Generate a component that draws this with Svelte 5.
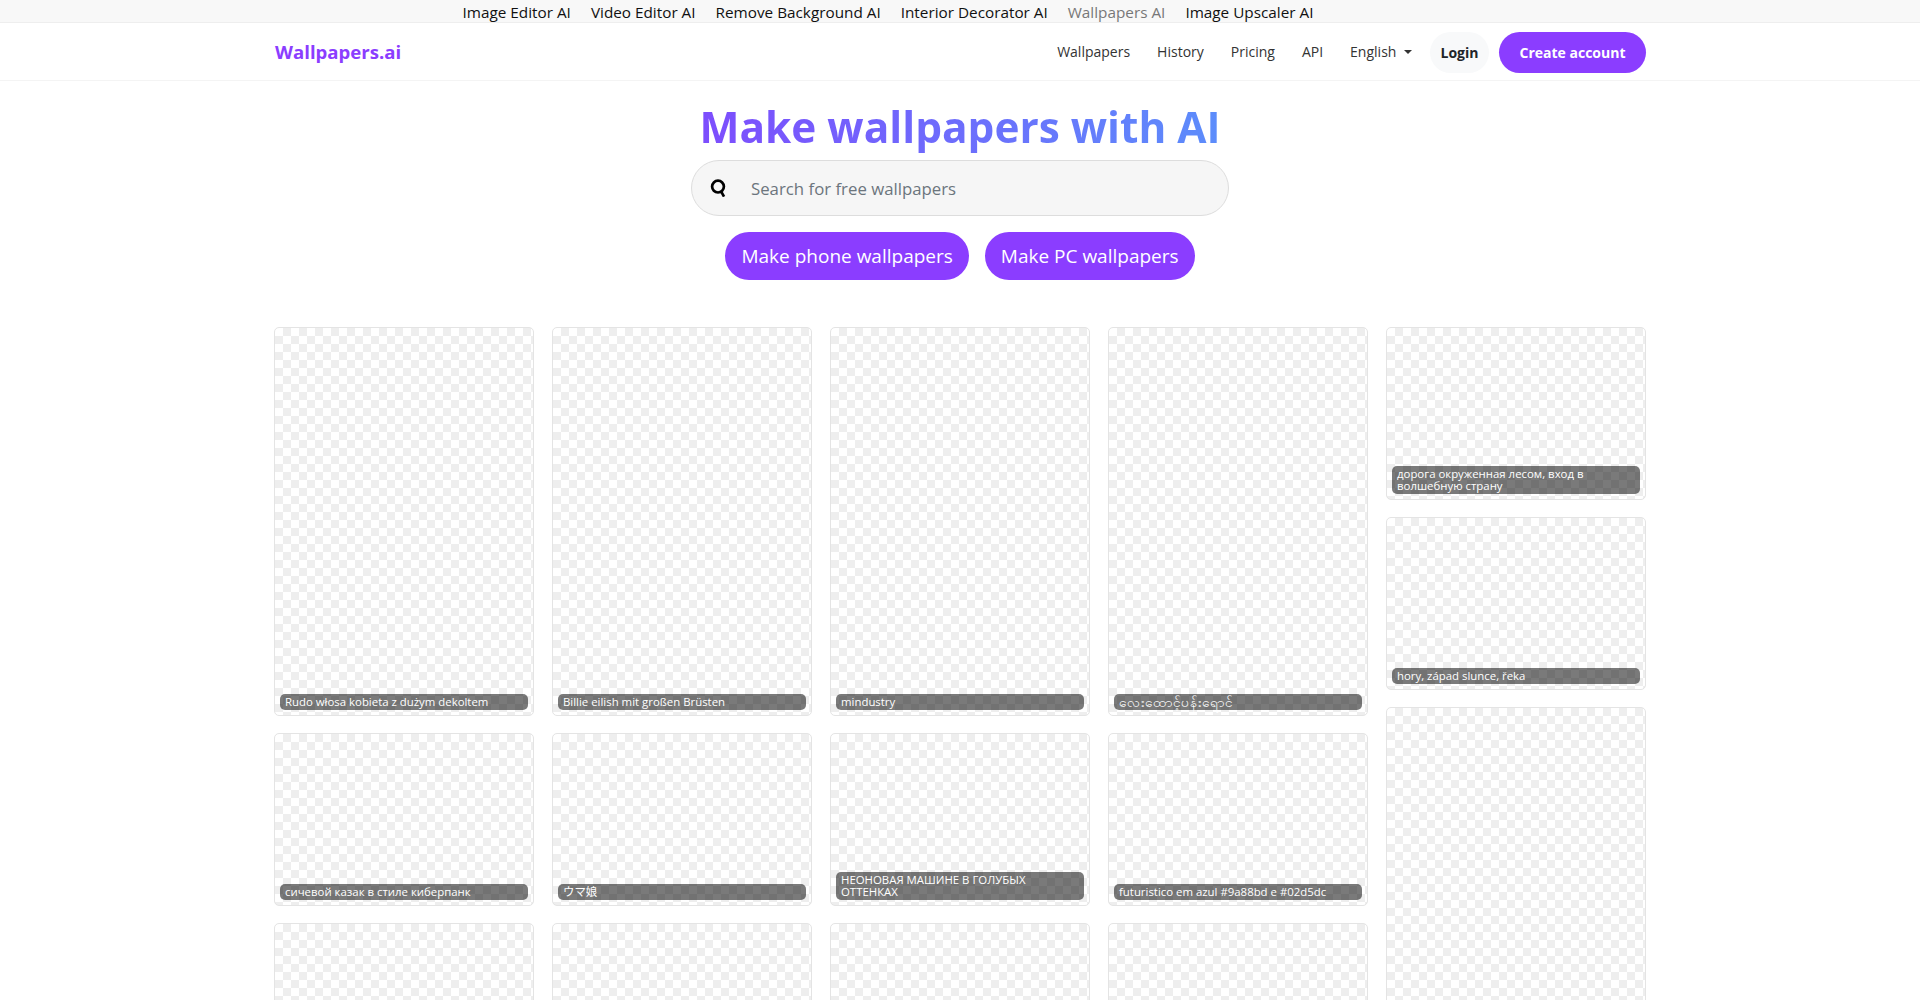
<script>
  const tools = [
    { label: 'Image Editor AI' },
    { label: 'Video Editor AI' },
    { label: 'Remove Background AI' },
    { label: 'Interior Decorator AI' },
    { label: 'Wallpapers AI', current: true },
    { label: 'Image Upscaler AI' }
  ]

  const links = ['Wallpapers', 'History', 'Pricing', 'API']

  const columns = [
    [
      { size: 'tall', prompt: 'Rudo włosa kobieta z dużym dekoltem' },
      { size: 'short', prompt: 'сичевой казак в стиле киберпанк' },
      { size: 'tall' }
    ],
    [
      { size: 'tall', prompt: 'Billie eilish mit großen Brüsten' },
      { size: 'short', prompt: 'ウマ娘' },
      { size: 'tall' }
    ],
    [
      { size: 'tall', prompt: 'mindustry' },
      { size: 'short', prompt: 'НЕОНОВАЯ МАШИНЕ В ГОЛУБЫХ ОТТЕНКАХ' },
      { size: 'tall' }
    ],
    [
      { size: 'tall', prompt: 'လေးထောင့်ပန်းရောင်', burmese: true },
      { size: 'short', prompt: 'futuristico em azul #9a88bd e #02d5dc' },
      { size: 'tall' }
    ],
    [
      { size: 'short', prompt: 'дорога окруженная лесом, вход в волшебную страну' },
      { size: 'short', prompt: 'hory, západ slunce, řeka' },
      { size: 'tall' }
    ]
  ]
</script>

<div class="page">
  <nav class="tools">
    {#each tools as tool}
      <a href="#top" class:current={tool.current}>{tool.label}</a>
    {/each}
  </nav>

  <header class="navbar">
    <div class="inner">
      <a class="brand" href="#top">Wallpapers.ai</a>
      <div class="menu">
        {#each links as link}
          <a class="link" href="#top">{link}</a>
        {/each}
        <a class="link lang" href="#top">English <span class="caret"></span></a>
        <a class="login" href="#top">Login</a>
        <a class="signup" href="#top">Create account</a>
      </div>
    </div>
  </header>

  <main>
    <h1><span>Make wallpapers with AI</span></h1>

    <form class="search">
      <svg viewBox="0 0 18 18" width="18" height="18" aria-hidden="true">
        <circle cx="8" cy="7.6" r="5.9" fill="none" stroke="#000" stroke-width="2.7" />
        <path d="M11.2 12.6 L14 17.6" fill="none" stroke="#000" stroke-width="2.7" />
      </svg>
      <input type="text" placeholder="Search for free wallpapers" />
    </form>

    <div class="actions">
      <a class="make" href="#top">Make phone wallpapers</a>
      <a class="make" href="#top">Make PC wallpapers</a>
    </div>

    <section class="gallery">
      {#each columns as column}
        <div class="column">
          {#each column as card}
            <article class="card {card.size}">
              {#if card.prompt}
                <p class="prompt" class:burmese={card.burmese}>{card.prompt}</p>
              {/if}
            </article>
          {/each}
        </div>
      {/each}
    </section>
  </main>
</div>

<style>
  :global(body) {
    background: #fff;
    color: #212529;
    font-family: "Open Sans", "Noto Sans CJK JP", sans-serif;
  }

  .page {
    height: 1000px;
    overflow: hidden;
  }

  a {
    color: inherit;
    text-decoration: none;
  }

  .tools {
    display: flex;
    justify-content: center;
    gap: 20px;
    box-sizing: border-box;
    height: 23px;
    padding-right: 144px;
    background: #f8f8f8;
    border-bottom: 1px solid #eee;
    font-size: 15.3px;
    line-height: 24px;
    color: #111;
  }

  .tools .current {
    color: #777;
  }

  .navbar {
    box-sizing: border-box;
    height: 58px;
    border-bottom: 1px solid #f4f4f4;
  }

  .inner {
    width: 1372px;
    margin: 0 auto;
    height: 100%;
    display: flex;
    align-items: center;
    justify-content: space-between;
  }

  .brand {
    margin-left: 1px;
    font-size: 18.6px;
    font-weight: 700;
    color: #8b3dff;
  }

  .menu {
    display: flex;
    align-items: center;
    font-size: 14px;
    color: #333;
  }

  .link {
    margin-right: 27px;
  }

  .lang {
    margin-right: 18px;
  }

  .caret {
    display: inline-block;
    margin-left: 4px;
    vertical-align: 3px;
    border-top: 4px solid #333;
    border-left: 4px solid transparent;
    border-right: 4px solid transparent;
  }

  .login {
    height: 41px;
    margin-top: 2px;
    padding: 0 10.5px;
    margin-right: 10px;
    border-radius: 21px;
    background: #f8f9fa;
    font-weight: 700;
    line-height: 41px;
    color: #212529;
  }

  .signup {
    height: 41px;
    margin-top: 2px;
    padding: 0 20.5px;
    border-radius: 21px;
    background: #8b3dff;
    font-weight: 700;
    line-height: 41px;
    color: #fff;
  }

  main {
    width: 1372px;
    margin: 0 auto;
  }

  h1 {
    margin: 17px 0 0;
    text-align: center;
    font-size: 42.4px;
    line-height: 58px;
    font-weight: 700;
  }

  h1 span {
    background: linear-gradient(90deg, #7d4dfd, #5c8dfb);
    -webkit-background-clip: text;
    background-clip: text;
    color: transparent;
  }

  .search {
    display: flex;
    align-items: center;
    gap: 21px;
    box-sizing: border-box;
    width: 538px;
    height: 56px;
    margin: 4px auto 0;
    padding: 0 18px;
    background: #f6f6f6;
    border: 1px solid #ddd;
    border-radius: 28px;
  }

  .search input {
    flex: 1;
    border: 0;
    outline: 0;
    background: transparent;
    font: inherit;
    font-size: 16.8px;
  }

  .search input::placeholder {
    color: #6c757d;
  }

  .actions {
    display: flex;
    justify-content: center;
    gap: 16px;
    margin-top: 16px;
  }

  .make {
    height: 48px;
    padding: 0 16px;
    border-radius: 24px;
    background: #8b3dff;
    color: #fff;
    font-size: 19px;
    line-height: 48px;
  }

  .gallery {
    display: flex;
    gap: 18px;
    margin-top: 47px;
  }

  .column {
    display: flex;
    flex-direction: column;
    gap: 17px;
    width: 260px;
  }

  .card {
    display: flex;
    align-items: flex-end;
    box-sizing: border-box;
    padding: 5px;
    border: 1px solid #e4e4e4;
    border-radius: 5px;
    background-color: #fff;
    background-image: conic-gradient(#eee 25%, #fff 0 50%, #eee 0 75%, #fff 0);
    background-size: 16px 16px;
  }

  .tall {
    height: 389px;
  }

  .short {
    height: 173px;
  }

  .prompt {
    flex: 1;
    margin: 0;
    padding: 2px 5px;
    border-radius: 5px;
    background: rgba(0, 0, 0, 0.52);
    color: #fff;
    font-size: 11.4px;
    line-height: 12px;
  }

  .burmese {
    font-size: 13.7px;
  }
</style>
